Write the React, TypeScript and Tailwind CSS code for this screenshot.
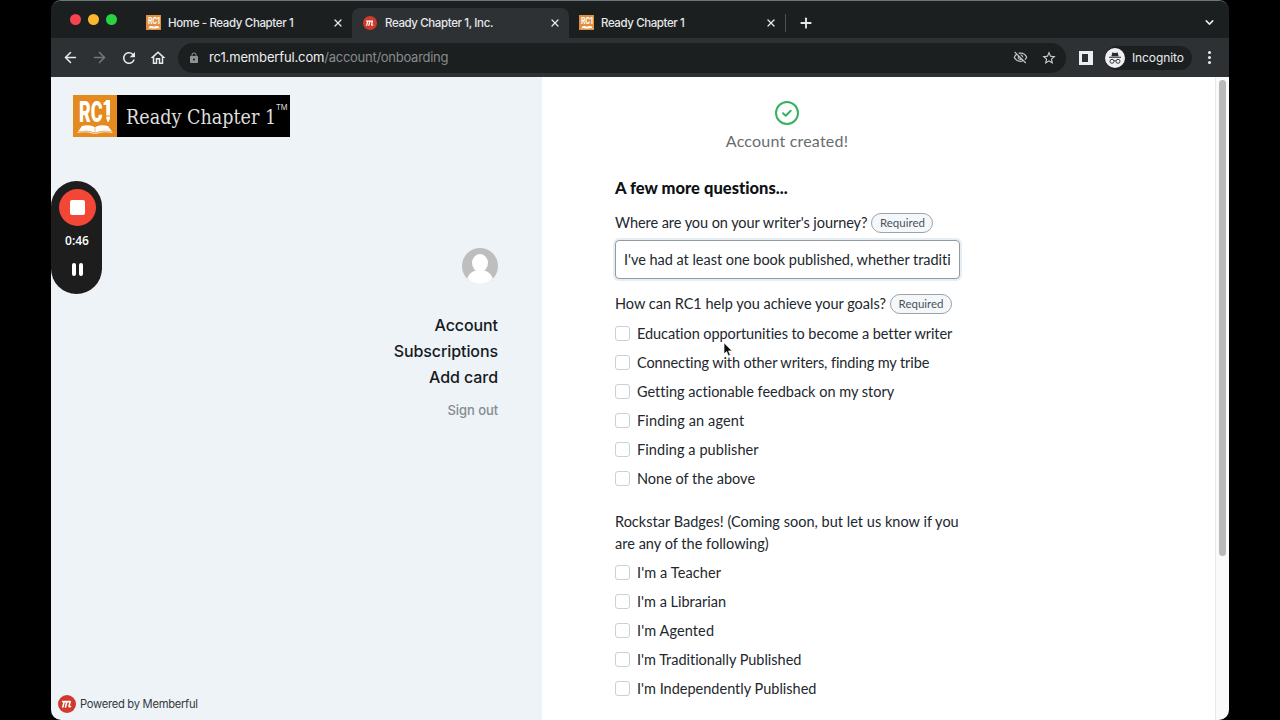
import * as React from "react";
import { ArrowLeft, ArrowRight, ChevronDown, Plus, X } from "lucide-react";
import { MdLock, MdOutlineHome, MdOutlineVisibilityOff, MdRefresh, MdStarBorder } from "react-icons/md";

const goals = [
  { label: "Education opportunities to become a better writer", track: "tracking-[-0.07px]" },
  { label: "Connecting with other writers, finding my tribe", track: "tracking-[-0.1px]" },
  { label: "Getting actionable feedback on my story", track: "tracking-normal" },
  { label: "Finding an agent", track: "tracking-[0.13px]" },
  { label: "Finding a publisher", track: "tracking-[0.08px]" },
  { label: "None of the above", track: "tracking-normal" },
];

const badges = [
  { label: "I'm a Teacher", track: "tracking-[0.1px]" },
  { label: "I'm a Librarian", track: "tracking-normal" },
  { label: "I'm Agented", track: "tracking-[0.1px]" },
  { label: "I'm Traditionally Published", track: "tracking-[-0.02px]" },
  { label: "I'm Independently Published", track: "tracking-normal" },
];

function Book({ className }: { className: string }) {
  return (
    <svg viewBox="0 0 36 9" className={className} fill="#fff" aria-hidden>
      <path d="M1 6.500 5 1c5-1.400 10-.8 13 1.300C21-.1 26-.4 31 1l4 5.500c-6-1.200-11-1-15 .8h-4C12 5.500 7 5.300 1 6.500Z" />
      <path d="M.5 7.500c6-1 11-1 15 .7h5c4-1.700 9-1.700 15-.7" fill="none" stroke="#fff" strokeWidth=".8" />
      <path d="M18 2.300v4.500" fill="none" stroke="#e58a1f" strokeWidth=".6" />
    </svg>
  );
}

function RcFavicon() {
  return (
    <span className="flex h-[15px] w-[15px] shrink-0 flex-col items-center bg-[#e2903f] pt-[1px]">
      <span className="scale-x-75 text-[9px] leading-[9px] font-bold tracking-[-0.2px] text-white">RC1</span>
      <Book className="mt-[1px] h-[3px] w-[12px]" />
    </span>
  );
}

function MemberfulMark({ className }: { className: string }) {
  return (
    <svg viewBox="0 0 18 18" className={className} aria-hidden>
      <circle cx="9" cy="9" r="9" fill="#d03a2c" />
      <path
        d="M4.600 6.600h1.600L4.800 12M6.900 6.600h2L7.500 12M9.600 6.600h2.600l-1.100 4c-.3 1.100.3 1.500 1.400.9"
        fill="none"
        stroke="#fff"
        strokeWidth="1.600"
        strokeLinecap="round"
        strokeLinejoin="round"
      />
    </svg>
  );
}

function TabBar() {
  return (
    <div className="flex h-[37px] bg-[#1c1f20] text-[11.500px] font-medium text-[#e6e8ea]">
      <div className="flex w-[95px] items-start gap-[7px] pt-[13px] pl-[19px]">
        <span className="h-[11px] w-[11px] rounded-full bg-[#f5444f]" />
        <span className="h-[11px] w-[11px] rounded-full bg-[#fdb72c]" />
        <span className="h-[11px] w-[11px] rounded-full bg-[#28d240]" />
      </div>
      <div className="flex w-[206px] items-center pt-[6px]">
        <RcFavicon />
        <span className="ml-[7px] grow pt-[2px] whitespace-nowrap tracking-[-0.36px]">Home - Ready Chapter 1</span>
        <X size={12} strokeWidth={2.600} className="mr-[8px]" />
      </div>
      <div className="mt-[7px] flex w-[217px] items-center rounded-t-[8px] bg-[#2e3133] pb-[1px] pl-[11px]">
        <MemberfulMark className="h-[14px] w-[14px]" />
        <span className="ml-[8px] grow pt-[2px] whitespace-nowrap tracking-[-0.38px]">Ready Chapter 1, Inc.</span>
        <X size={12} strokeWidth={2.600} className="mr-[8px]" />
      </div>
      <div className="flex w-[216px] items-center pl-[10px] pt-[6px]">
        <RcFavicon />
        <span className="ml-[7px] grow pt-[2px] whitespace-nowrap tracking-[-0.4px]">Ready Chapter 1</span>
        <X size={12} strokeWidth={2.600} className="mr-[8px]" />
      </div>
      <span className="mt-[13px] h-[18px] w-px bg-[#4c5053]" />
      <Plus size={16} strokeWidth={2.800} className="mt-[14px] ml-[12px]" />
      <ChevronDown size={13} strokeWidth={2.800} className="mt-[15px] mr-[13px] ml-auto" />
    </div>
  );
}

function Toolbar() {
  return (
    <div className="flex h-[39px] items-center bg-[#2e3133] text-[#e8eaed]">
      <ArrowLeft size={17} strokeWidth={2.200} className="ml-[11px]" />
      <ArrowRight size={17} strokeWidth={2.200} className="ml-[12px] text-[#75797c]" />
      <MdRefresh size={18} className="ml-[12px]" />
      <MdOutlineHome size={18} className="ml-[11px]" />
      <div className="ml-[11px] flex h-[30px] w-[888px] items-center rounded-full bg-[#1c1f20] pl-[10px]">
        <MdLock size={12} className="text-[#8f9396]" />
        <span className="ml-[9px] text-[13px] tracking-[-0.27px] text-[#888c8f]">
          <span className="tracking-[-0.14px] text-[#eceef0]">rc1.memberful.com</span>/account/onboarding
        </span>
        <MdOutlineVisibilityOff size={15} className="mr-[13px] ml-auto text-[#c0c3c6]" />
        <MdStarBorder size={16} className="mr-[9px] text-[#d0d3d6]" />
      </div>
      <svg viewBox="0 0 14 14" className="ml-[13px] h-[14px] w-[14px]" aria-hidden>
        <path d="M0 0h14v14H0zM3 3v8h6V3z" fill="#eceef0" fillRule="evenodd" />
      </svg>
      <div className="ml-[12px] flex h-[24px] w-[87px] items-center rounded-full bg-[#1c1f20]">
        <svg viewBox="0 0 20 20" className="h-[20px] w-[20px]" aria-hidden>
          <circle cx="10" cy="10" r="10" fill="#eef0f4" />
          <path d="M7.300 4.500 10 5l2.700-.5.9 3.700H6.400zM4 8.800h12v1H4z" fill="#292c2e" />
          <g fill="none" stroke="#393c3f" strokeWidth="1">
            <circle cx="7" cy="13.300" r="2" />
            <circle cx="13" cy="13.300" r="2" />
            <path d="M9 13q1-.7 2 0" />
          </g>
        </svg>
        <span className="ml-[7px] text-[12px] tracking-[-0.1px] text-[#e8eaed]">Incognito</span>
      </div>
      <div className="ml-[16px] flex flex-col gap-[2px]">
        <span className="h-[3px] w-[3px] rounded-full bg-[#e8eaed]" />
        <span className="h-[3px] w-[3px] rounded-full bg-[#e8eaed]" />
        <span className="h-[3px] w-[3px] rounded-full bg-[#e8eaed]" />
      </div>
    </div>
  );
}

function Sidebar() {
  return (
    <aside className="flex w-[491px] shrink-0 flex-col bg-[#eef3f8] pt-[18px]">
      <div className="ml-[22px] flex h-[42px] w-[217px] bg-black text-white">
        <div className="flex w-[44px] shrink-0 flex-col items-center bg-[#e58a1f] pt-[5px]">
          <div className="flex h-[25px] w-[32px] gap-[2px]">
            <span className="w-[22px] origin-left scale-x-[0.6] font-['Roboto',sans-serif] text-[30px] leading-[23px] font-black">
              RC
            </span>
            {/* the 1 is a pencil standing on its tip */}
            <svg viewBox="0 0 8 23" className="h-[23px] w-[8px]" fill="#fff" aria-hidden>
              <path d="M3 0h4v15.500H3.300V5H.5V2.500Q2.800 2 3 0zM3.300 16.500H7v2L5.600 22h-.9L3.300 18.500z" />
            </svg>
          </div>
          <Book className="h-[9px] w-[36px]" />
        </div>
        <div className="flex whitespace-nowrap pl-[9px]">
          <span className="w-[150px] font-['DejaVu_Serif_Condensed','DejaVu_Serif',serif] text-[19.500px] leading-[45px] tracking-[0.03px] text-[#dedede]">
            Ready Chapter 1
          </span>
          <span className="mt-[8px] text-[7.500px] leading-[9px] tracking-[-0.2px] text-[#dedede]">TM</span>
        </div>
      </div>
      <nav className="mt-[111px] mr-[44px] flex flex-col items-end text-[16px] leading-[26px] font-medium tracking-[-0.08px] text-[#16191d]">
        <svg viewBox="0 0 36 36" className="mb-[28px] h-[36px] w-[36px] rounded-full" aria-hidden>
          <rect width="36" height="36" fill="#bebebe" />
          <ellipse cx="18" cy="15" rx="8" ry="9" fill="#fff" />
          <path d="M5 36v-5c2-6 6.500-9 13-9s11 3 13 9v5z" fill="#fff" />
        </svg>
        <a>Account</a>
        <a>Subscriptions</a>
        <a>Add card</a>
        <a className="mt-[7px] text-[13px] text-[#878b8f]">Sign out</a>
      </nav>
      <div className="mt-auto mb-[7px] ml-[7px] flex items-center gap-[4px] text-[11.200px] leading-[18px] tracking-[-0.28px] text-[#333940]">
        <MemberfulMark className="h-[18px] w-[18px]" />
        <span>Powered by Memberful</span>
      </div>
    </aside>
  );
}

function Required() {
  return (
    <span className="flex h-[20px] w-[62px] items-center justify-center rounded-full border border-[#9ba3aa] bg-[#f5f8fa] text-[11.500px] text-[#4b5157]">
      Required
    </span>
  );
}

function CheckList({ items }: { items: { label: string; track: string }[] }) {
  return (
    <div className="flex flex-col">
      {items.map((item) => (
        <label key={item.label} className="flex h-[29px] items-center gap-[7px] whitespace-nowrap">
          <span className="h-[15px] w-[15px] shrink-0 rounded-[3px] border border-[#cbd0d4] bg-white" />
          <span className={item.track}>{item.label}</span>
        </label>
      ))}
    </div>
  );
}

function OnboardingForm() {
  return (
    <main className="flex grow justify-start bg-white pl-[73px]">
      <form className="w-[345px] font-['Lato',sans-serif] text-[14.500px] leading-[22px] text-[#22272d] [font-variant-ligatures:none]">
        <div className="flex flex-col items-center pt-[24px] pr-[1px]">
          <svg viewBox="0 0 24 24" className="h-[24px] w-[24px]" fill="none" stroke="#36b25f" strokeWidth="2" aria-hidden>
            <circle cx="12" cy="12" r="11" />
            <path d="m8 12.300 2.700 2.500 5-5" strokeLinecap="round" strokeLinejoin="round" />
          </svg>
          <p className="mt-[5px] text-[16px] tracking-[0.2px] text-[#686c70]">Account created!</p>
        </div>
        <h1 className="mt-[25px] text-[16.500px] leading-[22px] font-black tracking-[0.03px] text-[#0e1115]">
          A few more questions...
        </h1>
        <div className="mt-[13px] flex h-[22px] items-center gap-[4px] whitespace-nowrap">
          <span className="tracking-[-0.06px]">Where are you on your writer's journey?</span>
          <Required />
        </div>
        <div className="mt-[6px] flex h-[39px] items-center rounded-[4px] border border-[#8f9ca5] bg-white pl-[8px] shadow-[0_0_0_2px_#e6eef3]">
          <span className="tracking-[-0.03px] whitespace-nowrap">I've had at least one book published, whether traditi</span>
        </div>
        <div className="mt-[14px] flex h-[22px] items-center gap-[4px] whitespace-nowrap">
          <span>How can RC1 help you achieve your goals?</span>
          <Required />
        </div>
        <div className="pt-[4px]">
          <CheckList items={goals} />
        </div>
        <p className="mt-[18px] tracking-[0.02px] whitespace-nowrap">
          Rockstar Badges! (Coming soon, but let us know if you
          <br />
          are any of the following)
        </p>
        <div className="pt-[3px]">
          <CheckList items={badges} />
        </div>
      </form>
    </main>
  );
}

// Floating screen recorder pill
function Recorder() {
  return (
    <div className="absolute top-[181px] left-[51px] flex h-[113px] w-[51px] flex-col items-center rounded-full bg-[#1d1d1e] pt-[8px] pl-[1px]">
      <span className="flex h-[37px] w-[37px] items-center justify-center rounded-full bg-[#f24636]">
        <span className="h-[15px] w-[15px] rounded-[2px] bg-white" />
      </span>
      <span className="mt-[7px] font-['Open_Sans',sans-serif] text-[12px] leading-[16px] font-semibold text-white">0:46</span>
      <span className="mt-[14px] flex gap-[3px]">
        <span className="h-[13px] w-[4px] rounded-full bg-white" />
        <span className="h-[13px] w-[4px] rounded-full bg-white" />
      </span>
    </div>
  );
}

export default function App() {
  return (
    <div className="relative flex h-[720px] w-[1280px] justify-center overflow-hidden bg-black font-['Inter','Liberation_Sans',sans-serif]">
      <div className="flex w-[1178px] flex-col overflow-hidden rounded-[10px] border-t border-[#6c7676]">
        <TabBar />
        <Toolbar />
        <div className="flex min-h-0 grow">
          <Sidebar />
          <OnboardingForm />
          <div className="flex w-[14px] shrink-0 justify-center border-l border-[#e8e8e8] bg-[#fafafa] pt-[3px]">
            <span className="h-[476px] w-[7px] rounded-full bg-[#b9b9b9]" />
          </div>
        </div>
      </div>
      <Recorder />
      <svg viewBox="0 0 10 15" className="absolute top-[342px] left-[723px] h-[15px] w-[10px]" aria-hidden>
        <path d="M1 .8v11.200l2.600-2.400 1.700 4.300 2-.8-1.700-4.200h3.500z" fill="#0c0c0c" stroke="#fff" strokeWidth=".7" />
      </svg>
    </div>
  );
}
